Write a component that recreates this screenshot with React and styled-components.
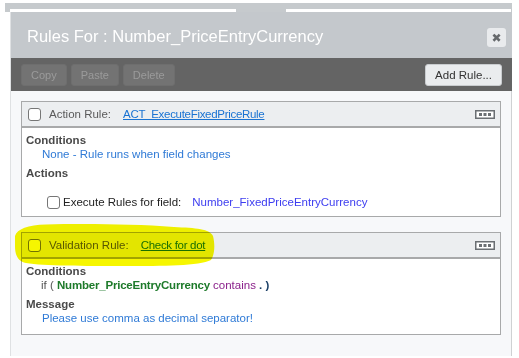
import styled, { createGlobalStyle } from "styled-components";

const GlobalStyle = createGlobalStyle`
  body {
    margin: 0;
    background: #ffffff;
    font-family: "Liberation Sans", Arial, sans-serif;
  }
`;

function Checkbox({ className }) {
  return <Box className={className} />;
}

function MoreIcon() {
  return (
    <svg width="20" height="9" viewBox="0 0 20 9">
      <rect x="0.75" y="0.75" width="18.5" height="7.5" fill="#fff" stroke="#6b6f73" strokeWidth="1.5" />
      <rect x="4" y="3" width="3" height="3" fill="#6b6f73" />
      <rect x="8.5" y="3" width="3" height="3" fill="#6b6f73" />
      <rect x="13" y="3" width="3" height="3" fill="#6b6f73" />
    </svg>
  );
}

function Highlight() {
  return (
    <Marker width="202" height="44" viewBox="0 0 202 44">
      <path
        d="M1 12 C3 5 14 1 32 0.5 C70 -0.5 120 0 160 3 C182 4 196 5 199 12 C201 20 201 30 197 36 C185 42 150 42 110 42 C70 42 30 42 12 39 C3 37 1 30 1 22 Z"
        fill="#f6f600"
      />
    </Marker>
  );
}

function RuleCard({ kind, name, children, highlighted }) {
  return (
    <Card>
      {highlighted && <Highlight />}
      <CardHeader>
        <Checkbox />
        <Kind>{kind}</Kind>
        <RuleLink href="#">{name}</RuleLink>
        <Spacer />
        <MoreIcon />
      </CardHeader>
      <CardBody $bottom={highlighted ? 9 : 7}>{children}</CardBody>
    </Card>
  );
}

export default function App() {
  return (
    <>
      <GlobalStyle />
      <Screen>
        <BackBand>
          <Strip $width={226} />
          <Strip $width={225} />
        </BackBand>
        <Dialog>
          <Header>
            <Title>Rules For : Number_PriceEntryCurrency</Title>
            <Close>✖</Close>
          </Header>
          <Toolbar>
            <ToolButton disabled>Copy</ToolButton>
            <ToolButton disabled>Paste</ToolButton>
            <ToolButton disabled>Delete</ToolButton>
            <Spacer />
            <ToolButton>Add Rule...</ToolButton>
          </Toolbar>
          <Body>
            <RuleCard kind="Action Rule:" name="ACT_ExecuteFixedPriceRule">
              <SectionLabel>Conditions</SectionLabel>
              <SectionText>None - Rule runs when field changes</SectionText>
              <SectionLabel $gap>Actions</SectionLabel>
              <ActionRow>
                <Checkbox />
                <ActionText>Execute Rules for field:</ActionText>
                <FieldRef>Number_FixedPriceEntryCurrency</FieldRef>
              </ActionRow>
            </RuleCard>
            <RuleCard kind="Validation Rule:" name="Check for dot" highlighted>
              <SectionLabel>Conditions</SectionLabel>
              <SectionText $muted>
                if ( <FieldName>Number_PriceEntryCurrency</FieldName> <Operator>contains</Operator>{" "}
                <Paren>.</Paren> <Paren>)</Paren>
              </SectionText>
              <SectionLabel $gap>Message</SectionLabel>
              <SectionText>Please use comma as decimal separator!</SectionText>
            </RuleCard>
          </Body>
        </Dialog>
      </Screen>
    </>
  );
}

const Screen = styled.div`
  padding-top: 3px;
  width: 519px;
  height: 358px;
  box-sizing: border-box;
`;

const BackBand = styled.div`
  margin-left: 5px;
  width: 507px;
  height: 9px;
  background: #c6cacd;
  display: flex;
  align-items: flex-end;
  gap: 50px;
  padding-left: 5px;
  box-sizing: border-box;
`;

const Strip = styled.div`
  width: ${(p) => p.$width}px;
  height: 3px;
  background: #ffffff;
`;

const Dialog = styled.div`
  margin-left: 10px;
  width: 502px;
  border-left: 1px solid #dfe1e3;
  box-sizing: border-box;
`;

const Header = styled.div`
  height: 46px;
  background: #c4c8cc;
  display: flex;
  align-items: center;
  padding: 0 6px 0 16px;
`;

const Title = styled.div`
  flex: 1;
  color: #ffffff;
  font-size: 16.5px;
  padding-top: 3px;
`;

const Close = styled.div`
  width: 19px;
  height: 19px;
  border-radius: 3px;
  background: #e9ebed;
  color: #66696c;
  font-size: 12px;
  font-family: "DejaVu Sans", sans-serif;
  display: flex;
  align-items: center;
  justify-content: center;
  margin-top: 5px;
`;

const Toolbar = styled.div`
  height: 33px;
  background: #646464;
  display: flex;
  align-items: center;
  gap: 4px;
  padding: 0 10px 0 10px;
  box-sizing: border-box;
`;

const ToolButton = styled.button`
  height: 22px;
  padding: 0 9px;
  border-radius: 3px;
  border: 1px solid ${(p) => (p.disabled ? "#6e6e6e" : "#c9cccf")};
  background: ${(p) => (p.disabled ? "#737373" : "#eaecee")};
  color: ${(p) => (p.disabled ? "#9b9b9b" : "#333333")};
  font-family: "Liberation Sans", Arial, sans-serif;
  font-size: ${(p) => (p.disabled ? 11 : 11.5)}px;
  cursor: ${(p) => (p.disabled ? "default" : "pointer")};
`;

const Body = styled.div`
  background: #f7f8fa;
  border-right: 1px solid #cfd1d3;
  padding: 10px 10px 21px 10px;
  display: flex;
  flex-direction: column;
  gap: 15px;
`;

const Card = styled.div`
  position: relative;
  border: 1px solid #a8a9aa;
  background: #ffffff;
`;

const CardHeader = styled.div`
  height: 24px;
  background: #eceef0;
  border-bottom: 2px solid #a8a9aa;
  display: flex;
  align-items: center;
  padding: 0 5px 0 6px;
  font-size: 11.5px;
`;

const Box = styled.span`
  width: 11px;
  height: 11px;
  border: 1px solid #767676;
  border-radius: 3px;
  background: #ffffff;
  flex: none;
`;

const Kind = styled.span`
  color: #5a5a5a;
  margin: 0 12px 0 8px;
`;

const RuleLink = styled.a`
  color: #1a73d2;
  text-decoration: underline;
  letter-spacing: -0.3px;
`;

const Spacer = styled.div`
  flex: 1;
`;

const CardBody = styled.div`
  padding: 5px 5px ${(p) => p.$bottom}px 4px;
  font-size: 11.5px;
  line-height: 14px;
`;

const SectionLabel = styled.div`
  font-weight: bold;
  color: #4a4a4a;
  margin-top: ${(p) => (p.$gap ? 5 : 0)}px;
`;

const SectionText = styled.div`
  padding-left: ${(p) => (p.$muted ? 15 : 16)}px;
  color: ${(p) => (p.$muted ? "#555555" : "#2f7ad6")};
`;

const ActionRow = styled.div`
  display: flex;
  align-items: center;
  gap: 3px;
  padding: 15px 0 0 21px;
  color: #222222;
`;

const ActionText = styled.span`
  margin-right: 8px;
`;

const FieldRef = styled.span`
  color: #3d3df0;
`;

const FieldName = styled.b`
  color: #1d7a2a;
  letter-spacing: -0.2px;
`;

const Operator = styled.span`
  color: #8a1f8a;
`;

const Paren = styled.b`
  color: #1a3f66;
`;

const Marker = styled.svg`
  position: absolute;
  left: -8px;
  top: -9px;
  mix-blend-mode: multiply;
  pointer-events: none;
  z-index: 1;
  overflow: visible;
`;
